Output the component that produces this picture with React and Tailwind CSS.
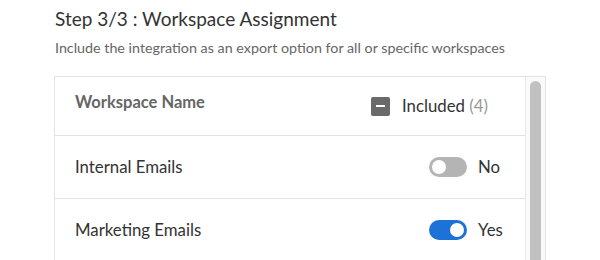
import { useState } from 'react'

const rows = [
  { name: 'Internal Emails', on: false },
  { name: 'Marketing Emails', on: true },
]

function Toggle({ on }) {
  return (
    <span className={on
      ? 'flex h-[20px] w-[38px] items-center justify-end rounded-full bg-[#1c72d6] px-[3px]'
      : 'flex h-[20px] w-[38px] items-center justify-start rounded-full bg-[#b4b4b4] px-[3px]'}>
      <span className="h-[14px] w-[14px] rounded-full bg-white" />
    </span>
  )
}

export default function App() {
  const [items] = useState(rows)

  return (
    <div className="h-[260px] overflow-hidden bg-white pl-[55px] pt-[6px] font-['Lato','Noto_Sans',sans-serif]">
      <h1 className="text-[19px] leading-[25px] text-[#333]">Step 3/3 : Workspace Assignment</h1>
      <p className="mt-[8px] text-[14.3px] leading-[18px] text-[#666]">
        Include the integration as an export option for all or specific workspaces
      </p>

      <div className="ml-[-1px] mt-[19px] flex w-[492px] border border-[#e3e3e3]">
        <div className="flex-1">
          <div className="flex h-[59px] items-center border-b border-[#e3e3e3] pl-[20px]">
            <div className="w-[296px] pb-[8px] text-[16.5px] font-bold text-[#666]">Workspace Name</div>
            <div className="flex items-center gap-[12px]">
              <span className="flex h-[19px] w-[19px] items-center justify-center rounded-[2px] bg-[#6a6a6a]">
                <span className="h-[2px] w-[9px] bg-white" />
              </span>
              <span className="text-[16.8px] text-[#333]">
                Included <span className="text-[#999]">(4)</span>
              </span>
            </div>
          </div>
          {items.map((r) => (
            <div key={r.name} className="flex h-[63px] items-center border-b border-[#e3e3e3] pl-[20px]">
              <div className="w-[354px] text-[16.8px] text-[#333]">{r.name}</div>
              <div className="flex items-center gap-[11px]">
                <Toggle on={r.on} />
                <span className="text-[16.8px] text-[#333]">{r.on ? 'Yes' : 'No'}</span>
              </div>
            </div>
          ))}
        </div>
        <div className="w-[20px] border-l border-[#e8e8e8] bg-[#fafafa] px-[4px] pt-[4px]">
          <div className="h-[200px] rounded-full bg-[#c1c1c1]" />
        </div>
      </div>
    </div>
  )
}
